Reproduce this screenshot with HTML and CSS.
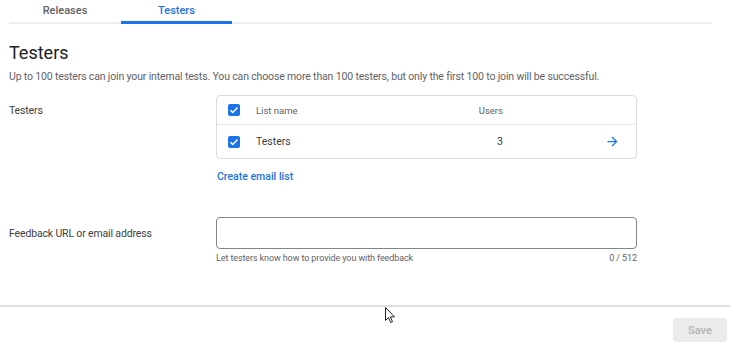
FILE: index.html
```html
<!DOCTYPE html>
<html>

<head>
    <title>Testers</title>
    <link rel="stylesheet" href="styles.css">
</head>

<body>
    <div class="page">
        <div class="tabs">
            <div class="tab">Releases</div>
            <div class="tab tab_active">Testers</div>
        </div>

        <div class="content">
            <h1 class="title">Testers</h1>
            <p class="desc">Up to 100 testers can join your internal tests. You can choose more than 100 testers, but only the first 100 to join will be successful.</p>

            <!-- testers lists -->
            <div class="form_row">
                <div class="form_label label_top">Testers</div>
                <div class="form_control">
                    <div class="list_card">
                        <div class="list_row list_head">
                            <span class="check"><svg viewBox="0 0 12 12" width="12" height="12"><path d="M2.5 6.2l2.3 2.2 4.7-4.8" fill="none" stroke="#fff" stroke-width="1.5"/></svg></span>
                            <span class="col_name">List name</span>
                            <span class="col_users">Users</span>
                            <span class="col_action"></span>
                        </div>
                        <div class="list_row">
                            <span class="check"><svg viewBox="0 0 12 12" width="12" height="12"><path d="M2.5 6.2l2.3 2.2 4.7-4.8" fill="none" stroke="#fff" stroke-width="1.5"/></svg></span>
                            <span class="col_name row_text">Testers</span>
                            <span class="col_users row_text">3</span>
                            <span class="col_action">
                                <svg viewBox="0 0 24 24" width="15" height="15"><path d="M12 4l-1.41 1.41L16.17 11H4v2h12.17l-5.58 5.59L12 20l8-8z" fill="#1a73e8"/></svg>
                            </span>
                        </div>
                    </div>
                    <a class="link" href="#">Create email list</a>
                </div>
            </div>

            <!-- feedback -->
            <div class="form_row feedback_row">
                <div class="form_label label_mid">Feedback URL or email address</div>
                <div class="form_control">
                    <input class="text_input" type="text">
                    <div class="hint">
                        <span>Let testers know how to provide you with feedback</span>
                        <span>0 / 512</span>
                    </div>
                </div>
            </div>
        </div>

        <div class="footer">
            <button class="save_btn" disabled>Save</button>
        </div>
    </div>

    <svg class="cursor" viewBox="0 0 11 17" width="11" height="17"><path d="M0.5 0.5v13l3-3 2.2 5 1.8-0.8-2.1-4.8h4.1z" fill="#fff" stroke="#222" stroke-width="1"/></svg>
</body>

</html>
```

FILE: styles.css
```css
body {
    margin: 0;
    font-family: Roboto, "Liberation Sans", sans-serif;
    color: #202124;
    background: #fff;
}

.page {
    height: 348px;
    display: flex;
    flex-direction: column;
}

.tabs {
    display: flex;
    margin: 0 18px 0 9px;
    border-bottom: 2px solid #eceff1;
}

.tab {
    width: 112px;
    height: 24px;
    box-sizing: border-box;
    margin-bottom: -2px;
    padding-top: 4px;
    text-align: center;
    font-size: 11px;
    font-weight: 500;
    line-height: 13px;
    color: #5f6368;
}

.tab_active {
    width: 111px;
    color: #1a73e8;
    border-bottom: 3px solid #1a73e8;
    border-radius: 2px 2px 0 0;
}

.content {
    padding-left: 9px;
}

.title {
    margin: 17px 0 4px;
    font-size: 18px;
    font-weight: 400;
    line-height: 24px;
}

.desc {
    margin: 0;
    font-size: 10.5px;
    letter-spacing: -0.15px;
    line-height: 16px;
    color: #5f6368;
}

.form_row {
    display: flex;
    margin-top: 10px;
}

.form_label {
    width: 207px;
    font-size: 10.5px;
    letter-spacing: -0.15px;
    line-height: 16px;
    color: #3c4043;
}

.label_top {
    padding-top: 8px;
}

.label_mid {
    padding-top: 9px;
}

.form_control {
    width: 421px;
}

.list_card {
    border: 1px solid #dadce0;
    border-radius: 4px;
}

.list_row {
    display: flex;
    align-items: center;
    height: 33px;
    padding: 0 16px 0 11px;
}

.list_head {
    height: 28px;
    border-bottom: 1px solid #e8eaed;
    font-size: 9.5px;
    color: #5f6368;
}

.check {
    width: 12px;
    height: 12px;
    display: flex;
    background: #1a73e8;
    border-radius: 2px;
}

.col_name {
    margin-left: 16px;
    flex: 1;
}

.col_users {
    width: 60px;
    text-align: right;
}

.col_action {
    width: 117px;
    display: flex;
    justify-content: flex-end;
}

.row_text {
    font-size: 10.5px;
    color: #3c4043;
}

.link {
    display: inline-block;
    margin: 10px 0 0 1px;
    font-size: 10.5px;
    font-weight: 500;
    line-height: 16px;
    color: #1a73e8;
    text-decoration: none;
}

.feedback_row {
    margin-top: 32px;
}

.text_input {
    display: block;
    width: 100%;
    height: 32px;
    box-sizing: border-box;
    margin: 0;
    border: 1px solid #80868b;
    border-radius: 4px;
}

.hint {
    display: flex;
    justify-content: space-between;
    margin-top: 3px;
    font-size: 9px;
    letter-spacing: -0.1px;
    line-height: 12px;
    color: #5f6368;
}

.footer {
    margin-top: auto;
    height: 43px;
    border-top: 2px solid #e0e0e0;
    display: flex;
    justify-content: flex-end;
    padding: 11px 3px 0 0;
    box-sizing: border-box;
}

.save_btn {
    width: 54px;
    height: 24px;
    border: none;
    border-radius: 4px;
    background: #ebebeb;
    color: #b4b4b4;
    font-family: Roboto, "Liberation Sans", sans-serif;
    font-size: 11px;
    font-weight: 500;
}

.cursor {
    position: absolute;
    left: 385px;
    top: 307px;
}
```
